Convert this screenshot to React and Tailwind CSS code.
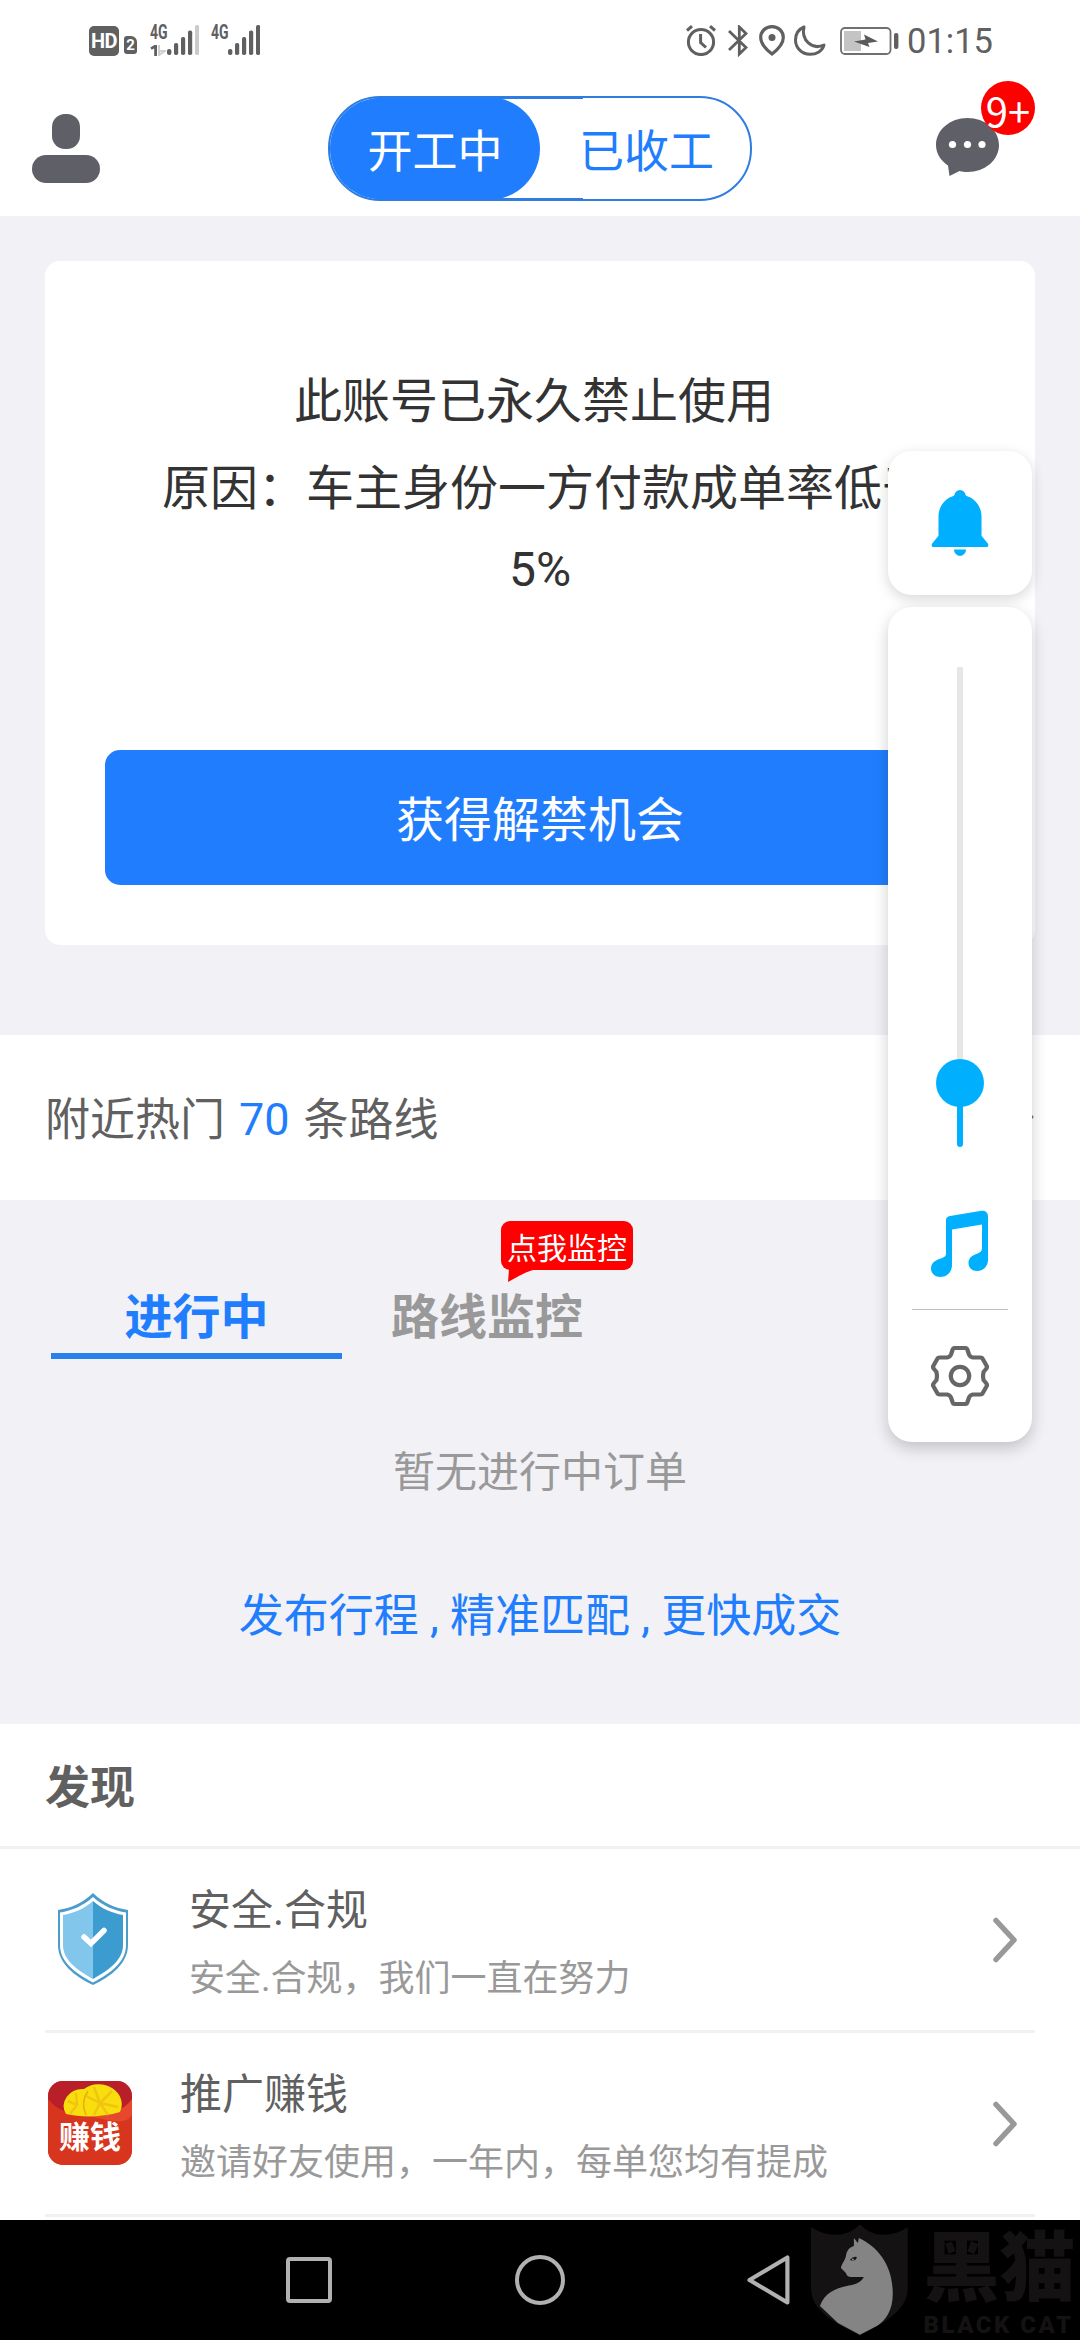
import React from "react";

function Bars({ dim }) {
  return (
    <svg width="32" height="30" viewBox="0 0 32 30" fill="#606060">
      <rect x="0" y="24" width="4.4" height="6" rx="2" />
      <rect x="7" y="18" width="4.2" height="12" rx="1.8" />
      <rect x="14" y="12" width="4.2" height="18" rx="1.8" />
      <rect x="21" y="5.5" width="4.2" height="24.5" rx="1.8" />
      <rect x="28" y="0" width="4.2" height="30" rx="1.8" fill={dim ? "#cbcbcb" : "#606060"} />
    </svg>
  );
}

function StatusBar() {
  return (
    <div className="flex h-[80px] items-start pl-[89px] pr-[89px] pt-6 text-[#606060]">
      <div className="mt-[2px] flex h-[30px] w-[30px] items-center justify-center rounded-[5px] bg-[#606060] text-[20px] leading-none font-bold tracking-[-0.5px] text-white">
        HD
      </div>
      <div className="mt-3 ml-[5px] flex h-[18px] w-[13px] items-center justify-center rounded-[3px] rounded-tr-[6px] bg-[#606060] text-[15px] leading-none font-bold text-white">
        2
      </div>
      <div className="ml-[13px] w-[17px]">
        <div className="h-[15px] w-[17px] origin-left scale-x-[0.7] text-[20px] leading-[16px] font-bold">4G</div>
        <svg className="mt-[6px]" width="16" height="11" viewBox="0 0 16 11">
          <path d="M1 3.6L5.6 1V11" fill="none" stroke="#606060" strokeWidth="2.8" />
          <path d="M9 0V10L15 6L10 6" fill="none" stroke="#cfcfcf" strokeWidth="2" />
        </svg>
      </div>
      <div className="mt-px"><Bars dim /></div>
      <div className="ml-3 h-[15px] w-[17px] origin-left scale-x-[0.7] text-[20px] leading-[16px] font-bold">4G</div>
      <div className="mt-px"><Bars /></div>

      <div className="mt-px ml-auto flex items-start">
        <svg width="30" height="31" viewBox="0 0 30 31" fill="none" stroke="#606060" strokeWidth="3">
          <circle cx="15" cy="17" r="12.6" />
          <path d="M1 5.5L6 1.2M29 5.5L24 1.2M14.6 9V17.5L20 22.5" />
        </svg>
        <svg className="ml-3" width="20" height="32" viewBox="0 0 20 32" fill="none" stroke="#606060" strokeWidth="2.8">
          <path d="M1 6L18 22.5L11.3 29V2L18 8.5L1 25" />
        </svg>
        <svg className="ml-[11px]" width="26" height="31" viewBox="0 0 26 31">
          <path d="M13 1.6C6.5 1.6 1.7 6.3 1.7 12.6C1.7 19 7 24.500 13 29C19 24.500 24.300 19 24.300 12.600C24.300 6.300 19.500 1.600 13 1.600Z" fill="none" stroke="#606060" strokeWidth="3.2" />
          <circle cx="13" cy="12.500" r="3.500" fill="#606060" />
        </svg>
        <svg className="ml-[9px]" width="32" height="31" viewBox="0 0 32 31" fill="none" stroke="#606060" strokeWidth="3" strokeLinejoin="round">
          <path d="M10 2C4 4.500 1.500 10 1.500 15C1.500 23 8 29.300 16 29.300C22.500 29.300 28.500 26 30 20C18 25.500 7 15 10 2Z" />
        </svg>
        <svg className="mt-px ml-[14px]" width="59" height="30" viewBox="0 0 59 30">
          <rect x="1" y="2" width="49.500" height="26" rx="4" fill="none" stroke="#707070" strokeWidth="1.800" />
          <rect x="4" y="5" width="17" height="20" fill="#c4c4c4" />
          <path d="M14 15.500L25.500 13.500L24 8.500L38 15.500L28 17L29.500 21Z" fill="#5a5a5a" />
          <rect x="54" y="7" width="4.400" height="16" rx="2" fill="#606060" />
        </svg>
        <span className="mt-[-4px] ml-2 w-[84px] text-[34.500px] leading-[40px] font-normal whitespace-nowrap">01:15</span>
      </div>
    </div>
  );
}

function TopBar() {
  return (
    <div className="flex h-[136px] items-start pr-[45px] pl-8">
      <div className="mt-[34px] flex w-[68px] flex-col items-center">
        <div className="h-[35px] w-[28px] rounded-[13px] bg-[#5f5f67]" />
        <div className="mt-[6px] h-[28px] w-[68px] rounded-[14px] bg-[#5f5f67]" />
      </div>
      <div className="mt-4 ml-[228px] flex h-[105px] w-[424px] overflow-hidden rounded-[52px] border-2 border-[#2f7de0]">
        <div className="h-full w-[253px] border-y border-[#2f7de0]">
          <div className="-mt-[2px] -ml-[2px] flex h-[103px] w-[212px] items-center justify-center rounded-[52px] bg-[#207efe] pt-[7px] pl-[2px] text-[45px] text-white">
            开工中
          </div>
        </div>
        <div className="flex h-full flex-1 items-center pt-[7px]">
          <span className="-ml-[4px] text-[45px] whitespace-nowrap text-[#207efe]">已收工</span>
        </div>
      </div>
      <div className="relative ml-auto h-[96px] w-[99px]">
        <svg className="absolute top-[38px] left-0" width="64" height="58" viewBox="0 0 64 58">
          <path d="M31.500 0C49 0 63 12 63 27C63 42 49 54 31.500 54C28.500 54 26 53.700 23.500 53L13.500 58L12 47.500C4.500 42.500 0 35 0 27C0 12 14 0 31.500 0Z" fill="#5f5f67" />
          <g fill="#fff">
            <circle cx="16.500" cy="26.500" r="3.600" />
            <circle cx="31.500" cy="26.500" r="3.600" />
            <circle cx="46" cy="26.500" r="3.600" />
          </g>
        </svg>
        <div className="absolute top-px left-[45px] flex h-[54px] w-[54px] items-center justify-center rounded-full bg-[#fe0000] pt-[3px] font-['Noto_Sans_CJK_SC',sans-serif] text-[40px] leading-none text-white">
          9+
        </div>
      </div>
    </div>
  );
}

function BanCard() {
  return (
    <div className="mx-[45px] mt-[45px] flex h-[684px] flex-col items-center rounded-[15px] bg-white px-[60px] text-[48px] text-[#333]">
      <p className="mt-[97px] mr-[12px] flex h-[88px] items-center">此账号已永久禁止使用</p>
      <p className="flex h-[86px] items-center pl-[12px] whitespace-nowrap">原因：车主身份一方付款成单率低于</p>
      <p className="flex h-[76px] items-center">5%</p>
      <div className="mt-[142px] flex h-[135px] w-full items-center justify-center rounded-[15px] bg-[#207efe] pt-[7px] text-white">
        获得解禁机会
      </div>
    </div>
  );
}

function HotRoutes() {
  return (
    <div className="mt-[90px] flex h-[165px] items-center bg-white pl-[45px] text-[45px] text-[#606060]">
      <span className="pt-[6px]">附近热门</span>
      <span className="mx-[14px] pt-[4px] text-[#207efe]">70</span>
      <span className="pt-[6px]">条路线</span>
      <svg className="ml-auto mr-[45px] mb-[2px]" width="26" height="48" viewBox="0 0 26 48" fill="none" stroke="#777" strokeWidth="5">
        <path d="M3 3L21.500 24L3 45" />
      </svg>
    </div>
  );
}

function Orders() {
  return (
    <div className="flex h-[524px] flex-col items-center">
      <div className="flex h-[159px] w-full items-end pl-[51px]">
        <div className="flex h-[84px] w-[291px] items-center justify-center border-b-6 border-[#2a7fee] pt-[8px] text-[48px] font-bold text-[#207efe]">
          进行中
        </div>
        <div className="relative ml-[49px] flex h-[84px] items-center pt-[2px] text-[48px] font-bold text-[#999]">
          路线监控
          <div className="absolute top-[-54px] left-[110px] flex h-[49px] w-[132px] items-center justify-center rounded-[9px] bg-[#fe0000] pt-[7px] text-[30px] leading-none font-normal text-white">
            点我监控
            <svg className="absolute top-[48px] left-[6px]" width="30" height="14" viewBox="0 0 30 14">
              <path d="M2 0H29C18 3 10 8 1 13Z" fill="#fe0000" />
            </svg>
          </div>
        </div>
      </div>
      <p className="mt-[82px] flex h-[64px] items-center text-[42px] text-[#999]">暂无进行中订单</p>
      <p className="mt-[79px] flex h-[64px] items-center text-[45px] whitespace-nowrap text-[#207efe]">发布行程 , 精准匹配 , 更快成交</p>
    </div>
  );
}

function ShieldIcon() {
  return (
    <svg className="ml-[6px]" width="72" height="94" viewBox="0 0 72 94">
      <path d="M36 0C46 10 58 15 71 17V52C71 70 55 83 36 92C17 83 1 70 1 52V17C14 15 26 10 36 0Z" fill="#4c9ccb" />
      <path d="M36 4C46 13 57 17.500 69 19.500V52C69 69 54 80 36 89.500C18 80 3 69 3 52V19.500C15 17.500 26 13 36 4Z" fill="#fff" />
      <path d="M36 8C27 16 17 20 6 22V52C6 67 20 77 36 86Z" fill="#83c6ec" />
      <path d="M36 8C45 16 55 20 66 22V52C66 67 52 77 36 86Z" fill="#3d9ccf" />
      <path d="M27 44L34 50.500L47 37.500" fill="none" stroke="#fff" strokeWidth="5.500" strokeLinecap="round" />
    </svg>
  );
}

function MoneyIcon() {
  return (
    <div className="relative mb-[2px] h-[84px] w-[84px] overflow-hidden rounded-[15px] bg-[#d9341f]">
      <svg className="absolute inset-0" width="84" height="84" viewBox="0 0 84 84">
        <rect width="84" height="40" fill="#b91f29" />
        <path d="M84 18C70 40 18 42 0 18V84H84Z" fill="#d8351f" />
        <path d="M84 18C76 30 58 36 40 35C58 38 76 46 84 34Z" fill="#e5482d" />
        <path d="M18 33A19 17 0 0 1 36 8A23 20 0 0 1 72 31C56 36 34 37 18 33Z" fill="#f8de0c" />
        <path d="M52 22L38 15M52 22L46 6M52 22L64 10M52 22L70 26M52 22L46 34M52 22L60 34M29 24L20 20M29 24L28 12M29 24L22 33" stroke="#f2c411" strokeWidth="2.500" />
        <path d="M40 10C35 17 34 25 38 34" fill="none" stroke="#e8a913" strokeWidth="1.500" />
      </svg>
      <div className="absolute inset-x-0 top-[38px] text-center text-[31px] leading-[38px] font-bold whitespace-nowrap text-white">赚钱</div>
    </div>
  );
}

function DiscoverRow({ icon, title, desc, indent }) {
  return (
    <div className="mx-[45px] flex h-[184px] items-center border-b-3 border-[#f2f2f2] pr-[17px]">
      <div className="flex w-[90px] justify-center">{icon}</div>
      <div className={indent}>
        <div className="flex h-[68px] items-center text-[42px] text-[#606060]">{title}</div>
        <div className="flex h-[68px] items-center text-[36px] whitespace-nowrap text-[#999]">{desc}</div>
      </div>
      <svg className="ml-auto" width="26" height="46" viewBox="0 0 26 46" fill="none" stroke="#999" strokeWidth="5.500" strokeLinecap="round" strokeLinejoin="round">
        <path d="M4 3.500L22 23L4 42.500" />
      </svg>
    </div>
  );
}

function Discover() {
  return (
    <div className="h-[496px] bg-white">
      <h2 className="flex h-[125px] items-center border-b-3 border-[#f2f2f2] pt-[7px] pl-[45px] text-[45px] font-bold text-[#606060]">发现</h2>
      <DiscoverRow icon={<ShieldIcon />} title="安全.合规" desc="安全.合规，我们一直在努力" indent="ml-[54px] pt-[11px]" />
      <DiscoverRow icon={<MoneyIcon />} title="推广赚钱" desc="邀请好友使用，一年内，每单您均有提成" indent="ml-[45px] pt-[11px]" />
    </div>
  );
}

function NavBar() {
  return (
    <div className="flex h-[120px] items-center bg-black pl-[286px]">
      <div className="h-[46px] w-[46px] rounded-[4px] border-4 border-[#b1b1b1]" />
      <div className="ml-[183px] h-[50px] w-[50px] rounded-full border-4 border-[#b1b1b1]" />
      <svg className="ml-[182px]" width="44" height="50" viewBox="0 0 44 50" fill="none" stroke="#b1b1b1" strokeWidth="4.200" strokeLinejoin="round">
        <path d="M40.500 2.500V47.500L2.500 25Z" />
      </svg>
      <svg className="ml-5" width="98" height="112" viewBox="0 0 98 112">
        <path d="M0 3C18 14 37 13 49 0C61 13 80 14 97 3V64C97 88 70 100 49 112C27 100 0 88 0 64Z" fill="#141213" />
        <path d="M43 14L47 19L48 14C69 24 82 43 82 70C82 86 75 97 66 102L49 111L27 99L9 82C14 67 29 63 41 61C47 59.500 51 57 53 53H41C37 53 36 52 35 49L30 44C31 39 34 37 35 32C36 26 39 23 43 22Z" fill="#848484" />
        <path d="M39 36Q42 32 46 33Q45 38 39 36Z" fill="#141213" />
        <path d="M41.500 34.500L42.500 36" stroke="#999" strokeWidth="1.500" />
      </svg>
      <div className="ml-[15px] flex h-[112px] w-[157px] flex-col text-[#141213]">
        <span className="h-[88px] pt-[6px] text-[76px] leading-[78px] font-black whitespace-nowrap">黑猫</span>
        <span className="h-[24px] text-[24px] leading-[26px] font-black tracking-[2.500px] whitespace-nowrap">BLACK CAT</span>
      </div>
    </div>
  );
}

function VolumePanel() {
  return (
    <div className="absolute top-[451px] left-[888px] flex w-[144px] flex-col gap-[12px]">
      <div className="flex h-[144px] items-center justify-center rounded-[24px] bg-white shadow-[0_4px_14px_rgba(0,0,0,0.16)]">
        <svg width="58" height="66" viewBox="0 0 58 62" preserveAspectRatio="none" fill="#00b0ff">
          <path d="M23 5.500C24 2 26 0 29 0C32 0 34 2 35 5.500C44 8 50.500 15.500 50.500 25V43L57 50.500C57.600 52 57.300 53.500 56 53.500H2C0.700 53.500 0.400 52 1 50.500L7.500 43V25C7.500 15.500 14 8 23 5.500Z" />
          <path d="M23 56H35C35 59.500 32 62 29 62C26 62 23 59.500 23 56Z" />
        </svg>
      </div>
      <div className="flex h-[835px] flex-col items-center rounded-[24px] bg-white pt-[60px] shadow-[0_6px_16px_rgba(0,0,0,0.2)]">
        <div className="h-[392px] w-[6px] bg-[#e6e6e6]" />
        <div className="h-[48px] w-[48px] rounded-full bg-[#00b0ff]" />
        <div className="-mt-px h-[41px] w-[6px] rounded-b-[3px] bg-[#00b0ff]" />
        <svg className="mt-[63px]" width="60" height="68" viewBox="0 0 60 68">
          <path d="M16 10C16 8 17.500 6.500 20 6L50 1C54.500 0 58 2 58 6.500V50C58 56.500 53 61 47 61C42 61 38.500 57.500 38.500 53C38.500 49 41 46 45 44.500C49 43 52 42 52 38V14.500L22 19.500V55C22 62 17 67 10.500 67C5 67 1 63.500 1 58.500C1 54 4 51 8 49.500C12 48 16 47 16 44Z" fill="#00b0ff" />
        </svg>
        <div className="mt-[31px] h-px w-[96px] bg-[#bdbdbd]" />
        <svg className="mt-[35px]" width="60" height="62" viewBox="-30 -31 60 62" fill="none" stroke="#666" strokeWidth="4.2" strokeLinejoin="round">
          <circle r="9.200" />
          <path d="M-5.500 -28H5.500Q7 -28 7.500 -26L9 -21.500Q10 -19 13 -18.500L20.500 -18.500Q22 -18.500 22.500 -17.500L27 -9.500Q27 -8 26 -7L23.500 -4Q22.500 0 23.500 4L26 7Q27 8 27 9.500L22.500 17.500Q22 18.500 20.500 18.500L13 18.500Q10 19 9 21.500L7.500 26Q7 28 5.500 28H-5.500Q-7 28 -7.500 26L-9 21.500Q-10 19 -13 18.500L-20.500 18.500Q-22 18.500 -22.500 17.500L-27 9.500Q-27 8 -26 7L-23.500 4Q-22.500 0 -23.500 -4L-26 -7Q-27 -8 -27 -9.500L-22.500 -17.500Q-22 -18.500 -20.500 -18.500L-13 -18.500Q-10 -19 -9 -21.500L-7.500 -26Q-7 -28 -5.500 -28Z" />
        </svg>
      </div>
    </div>
  );
}

export default function App() {
  return (
    <div className="relative h-[2340px] w-[1080px] overflow-hidden bg-[#f2f1f6] font-['Roboto','Noto_Sans_CJK_SC',sans-serif] leading-none">
      <div className="bg-white">
        <StatusBar />
        <TopBar />
      </div>
      <BanCard />
      <HotRoutes />
      <Orders />
      <Discover />
      <NavBar />
      <VolumePanel />
    </div>
  );
}
